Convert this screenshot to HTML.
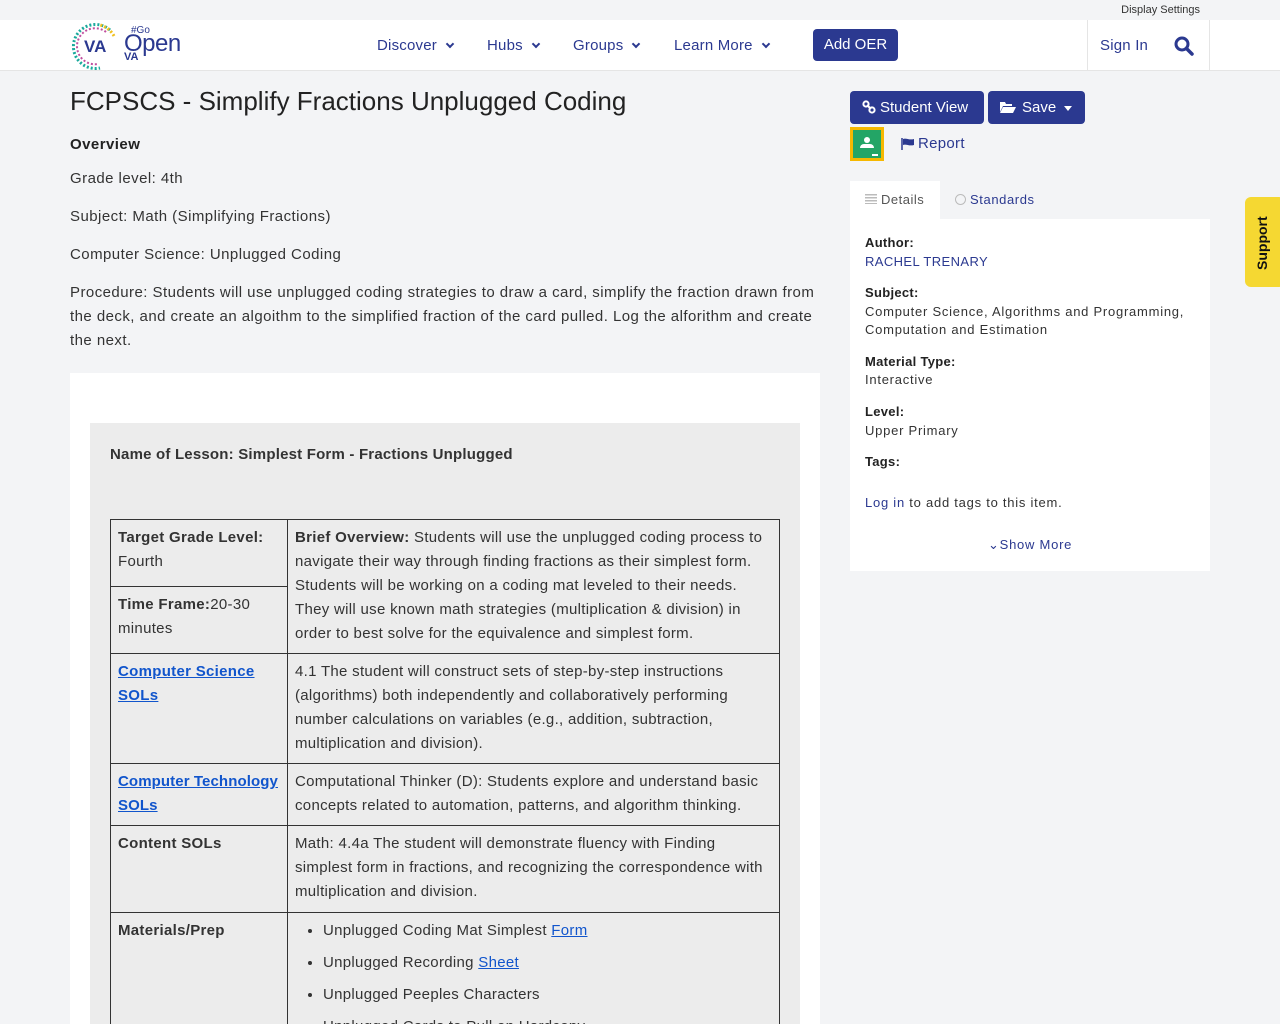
<!DOCTYPE html>
<html><head><meta charset="utf-8"><style>
*{box-sizing:border-box;margin:0;padding:0}
html{width:1280px;height:1024px;overflow:hidden}
body{width:1280px;height:1024px;overflow:hidden;background:#f3f4f6;font-family:"Liberation Sans",sans-serif;color:#333;font-size:15px;position:relative}
a{color:#2b3990;text-decoration:none}
.abs{position:absolute}
.top{height:20px;font-size:11px;text-align:right;padding-right:80px;line-height:20px;color:#333}
.hdr{position:absolute;top:20px;left:0;width:1280px;height:51px;background:#fff;border-bottom:1px solid #e5e5e5}
.nav{position:absolute;top:0;font-size:15px;color:#2b3990;line-height:51px;letter-spacing:.2px}
.car{display:inline-block;width:6px;height:6px;border-right:2px solid #2b3990;border-bottom:2px solid #2b3990;transform:rotate(45deg);margin-left:10px;position:relative;top:-3px}
.btn{background:#2b3990;color:#fff;border-radius:4px;position:absolute}
p.t{position:absolute;left:70px;font-size:15px;letter-spacing:.45px;line-height:24px;color:#333}
table{border-collapse:collapse;position:absolute;left:110px;top:519px;width:670px;table-layout:fixed}
td{border:1px solid #333;vertical-align:top;padding:6px 7px;line-height:24px;font-size:15px;letter-spacing:.3px;color:#333;white-space:nowrap;overflow:hidden}
td a{color:#1155cc;text-decoration:underline;font-weight:bold}
.lbl{font-weight:bold;font-size:13px;color:#222;position:absolute;left:865px;letter-spacing:.3px}
.val{font-size:13px;color:#333;position:absolute;left:865px;line-height:18px;letter-spacing:.75px}
</style></head><body>
<div class="top">Display Settings</div>
<div class="hdr">
 <svg class="abs" style="left:70px;top:2px" width="50" height="48" viewBox="0 0 50 48">
  <g fill="none" stroke-width="3" stroke-dasharray="2 2">
   <path d="M40 8 A22 22 0 1 0 30 46" stroke="#1aa99c"/>
   <path d="M36 10 A18 18 0 1 0 28 42" stroke="#c04fa0" stroke-width="2"/>
   <path d="M44 14 A22 22 0 0 0 30 3" stroke="#f0c020"/>
  </g>
  <text x="14" y="30" font-family="Liberation Sans" font-weight="bold" font-size="17" fill="#2b3990">VA</text>
 </svg>
 <div class="abs" style="left:131px;top:5px;font-size:10px;color:#2b3990">#Go</div>
 <div class="abs" style="left:124px;top:10px;font-size:24px;color:#2b3990;letter-spacing:-.5px">Open</div>
 <div class="abs" style="left:124px;top:31px;font-size:11px;font-weight:bold;color:#2b3990">VA</div>
 <div class="nav" style="left:377px">Discover<span class="car"></span></div>
 <div class="nav" style="left:487px">Hubs<span class="car"></span></div>
 <div class="nav" style="left:573px">Groups<span class="car"></span></div>
 <div class="nav" style="left:674px">Learn More<span class="car"></span></div>
 <div class="btn" style="left:813px;top:9px;width:85px;height:32px;line-height:32px;text-align:center;font-size:15px">Add OER</div>
 <div class="abs" style="left:1087px;top:0;width:1px;height:51px;background:#e5e5e5"></div>
 <div class="abs" style="left:1209px;top:0;width:1px;height:51px;background:#e5e5e5"></div>
 <div class="nav" style="left:1100px">Sign In</div>
 <svg class="abs" style="left:1174px;top:16px" width="20" height="20" viewBox="0 0 20 20"><circle cx="8" cy="8" r="6" fill="none" stroke="#2b3990" stroke-width="3"/><path d="M12.5 12.5 L18 18" stroke="#2b3990" stroke-width="3.5" stroke-linecap="round"/></svg>
</div>

<div class="abs" style="left:70px;top:86px;font-size:26px;color:#222">FCPSCS - Simplify Fractions Unplugged Coding</div>
<p class="t" style="top:133px;font-weight:bold;color:#222">Overview</p>
<p class="t" style="top:167px">Grade level: 4th</p>
<p class="t" style="top:205px">Subject: Math (Simplifying Fractions)</p>
<p class="t" style="top:243px">Computer Science: Unplugged Coding</p>
<p class="t" style="top:281px;width:750px">Procedure: Students will use unplugged coding strategies to draw a card, simplify the fraction drawn from the deck, and create an algoithm to the simplified fraction of the card pulled. Log the alforithm and create the next.</p>

<div class="abs" style="left:70px;top:373px;width:750px;height:651px;background:#fff"></div>
<div class="abs" style="left:90px;top:423px;width:710px;height:601px;background:#ececec"></div>
<div class="abs" style="left:110px;top:446px;font-weight:bold;font-size:15px;color:#333;letter-spacing:.2px">Name of Lesson: Simplest Form - Fractions Unplugged</div>
<table>
<colgroup><col style="width:177px"><col></colgroup>
<tr style="height:67px"><td><b>Target Grade Level:</b><br>Fourth</td><td rowspan="2"><b>Brief Overview:</b> Students will use the unplugged coding process to<br>navigate their way through finding fractions as their simplest form.<br>Students will be working on a coding mat leveled to their needs.<br>They will use known math strategies (multiplication &amp; division) in<br>order to best solve for the equivalence and simplest form.</td></tr>
<tr style="height:67px"><td><b>Time Frame:</b>20-30<br>minutes</td></tr>
<tr style="height:110px"><td><a>Computer Science<br>SOLs</a></td><td>4.1 The student will construct sets of step-by-step instructions<br>(algorithms) both independently and collaboratively performing<br>number calculations on variables (e.g., addition, subtraction,<br>multiplication and division).</td></tr>
<tr style="height:62px"><td style="letter-spacing:.1px"><a>Computer Technology<br>SOLs</a></td><td>Computational Thinker (D): Students explore and understand basic<br>concepts related to automation, patterns, and algorithm thinking.</td></tr>
<tr style="height:87px"><td><b>Content SOLs</b></td><td>Math: 4.4a The student will demonstrate fluency with Finding<br>simplest form in fractions, and recognizing the correspondence with<br>multiplication and division.</td></tr>
<tr style="height:150px"><td><b>Materials/Prep</b></td><td><ul style="padding-left:28px;line-height:32px;margin-top:-4px">
<li>Unplugged Coding Mat Simplest <a style="font-weight:normal">Form</a></li>
<li>Unplugged Recording <a style="font-weight:normal">Sheet</a></li>
<li>Unplugged Peeples Characters</li>
<li>Unplugged Cards to Pull on Hardcopy</li></ul></td></tr>
</table>

<div class="btn" style="left:850px;top:91px;width:134px;height:33px;line-height:33px;font-size:15px;padding-left:30px">Student View</div>
<svg class="abs" style="left:862px;top:100px" width="14" height="14" viewBox="0 0 14 14"><circle cx="4" cy="4" r="2.6" fill="none" stroke="#fff" stroke-width="2"/><circle cx="10" cy="10" r="2.6" fill="none" stroke="#fff" stroke-width="2"/><path d="M5 5 L9 9" stroke="#fff" stroke-width="2"/></svg>
<div class="btn" style="left:988px;top:91px;width:97px;height:33px;line-height:33px;font-size:15px;padding-left:34px">Save</div>
<svg class="abs" style="left:1000px;top:101px" width="16" height="12" viewBox="0 0 16 12"><path d="M0 1h5l1 2h6v2H3L0 11z M3 6h13l-3 6H0z" fill="#fff"/></svg>
<div class="abs" style="left:1064px;top:106px;border-left:4px solid transparent;border-right:4px solid transparent;border-top:5px solid #fff"></div>
<div class="abs" style="left:850px;top:127px;width:34px;height:34px;background:#f6b800;padding:3px"><div style="width:28px;height:28px;background:#23a566;position:relative"><div style="position:absolute;left:11px;top:7px;width:6px;height:6px;border-radius:50%;background:#fff"></div><div style="position:absolute;left:7px;top:14px;width:14px;height:4px;border-radius:4px 4px 0 0;background:#fff"></div><div style="position:absolute;right:3px;bottom:2px;width:6px;height:2px;background:#fff"></div></div></div>
<svg class="abs" style="left:901px;top:138px" width="14" height="12" viewBox="0 0 14 12"><path d="M1 0v12" stroke="#2b3990" stroke-width="1.5"/><path d="M2 1c3-1.5 6 1.5 11 0v6c-5 1.5-8-1.5-11 0z" fill="#2b3990"/></svg>
<div class="abs" style="left:918px;top:135px;font-size:15px;color:#2b3990;letter-spacing:.3px">Report</div>

<div class="abs" style="left:850px;top:181px;width:90px;height:38px;background:#fff"></div>
<svg class="abs" style="left:865px;top:194px" width="12" height="10"><g fill="#bbb"><rect y="0" width="12" height="1.5"/><rect y="3" width="12" height="1.5"/><rect y="6" width="12" height="1.5"/><rect y="9" width="12" height="1"/></g></svg>
<div class="abs" style="left:881px;top:192px;font-size:13px;color:#555;letter-spacing:.5px">Details</div>
<div class="abs" style="left:955px;top:194px;width:11px;height:11px;border:1px solid #bbb;border-radius:50%"></div>
<div class="abs" style="left:970px;top:192px;font-size:13px;color:#2b3990;letter-spacing:.6px">Standards</div>
<div class="abs" style="left:850px;top:219px;width:360px;height:352px;background:#fff"></div>
<div class="lbl" style="top:235px">Author:</div>
<div class="val" style="top:253px;color:#2b3990;letter-spacing:.4px">RACHEL TRENARY</div>
<div class="lbl" style="top:285px">Subject:</div>
<div class="val" style="top:303px;width:340px">Computer Science, Algorithms and Programming, Computation and Estimation</div>
<div class="lbl" style="top:354px">Material Type:</div>
<div class="val" style="top:371px">Interactive</div>
<div class="lbl" style="top:404px">Level:</div>
<div class="val" style="top:422px">Upper Primary</div>
<div class="lbl" style="top:454px">Tags:</div>
<div class="val" style="top:494px"><span style="color:#2b3990">Log in</span> to add tags to this item.</div>
<div class="val" style="top:536px;left:988px;color:#2b3990">&#8964;Show More</div>

<div class="abs" style="left:1245px;top:197px;width:40px;height:90px;background:#f5d832;border-radius:6px"></div>
<div class="abs" style="left:1254px;top:270px;transform:rotate(-90deg);transform-origin:0 0;font-weight:bold;font-size:14px;color:#111">Support</div>
</body></html>
